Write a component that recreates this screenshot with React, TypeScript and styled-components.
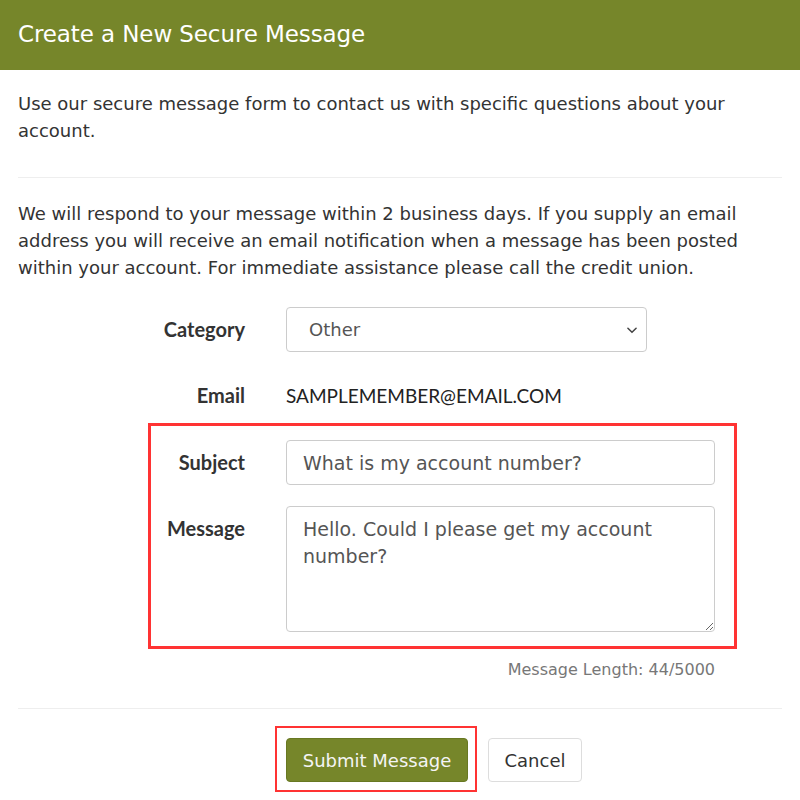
import React, { useState } from 'react'
import styled, { createGlobalStyle, css } from 'styled-components'

const GlobalStyle = createGlobalStyle`
  body {
    margin: 0;
    background: #fff;
    font-family: "DejaVu Sans", "Open Sans", sans-serif;
    color: #333;
  }
`

const BRAND = '#76862a'
const BODY_FONT = `"DejaVu Sans", "Open Sans", sans-serif`
const LABEL_FONT = `Lato, "Open Sans", sans-serif`

const Header = styled.header`
  height: 70px;
  display: flex;
  align-items: center;
  padding: 0 18px 3px;
  box-sizing: border-box;
  background: ${BRAND};
`

const Title = styled.h1`
  margin: 0;
  font-family: ${BODY_FONT};
  font-weight: normal;
  font-size: 23px;
  color: #fff;
  letter-spacing: -0.1px;
`

const Body = styled.main`
  padding: 20px 18px 0;
`

const Intro = styled.p`
  margin: 0;
  font-size: 18px;
  line-height: 27px;
  color: #333;
`

const Divider = styled.hr<{ $top: number; $bottom: number }>`
  border: 0;
  border-top: 1px solid #eee;
  margin: ${({ $top, $bottom }) => `${$top}px 0 ${$bottom}px`};
`

const Form = styled.form`
  display: flex;
  flex-direction: column;
  margin-top: 26px;
`

const Row = styled.div<{ $labelWidth?: number; $gap?: number }>`
  display: grid;
  grid-template-columns: ${({ $labelWidth = 227 }) => `${$labelWidth}px 429px`};
  column-gap: 41px;
  align-items: start;
  margin-bottom: ${({ $gap = 21 }) => $gap}px;
`

const Label = styled.label`
  font-family: ${LABEL_FONT};
  font-weight: 700;
  font-size: 20px;
  color: #333;
  text-align: right;
  line-height: 45px;
`

const fieldBase = css`
  box-sizing: border-box;
  width: 100%;
  border: 1px solid #ccc;
  border-radius: 4px;
  background: #fff;
  font-family: ${BODY_FONT};
  font-size: 19px;
  color: #555;
  padding: 0 16px;
  outline: none;
`

const SelectWrap = styled.div`
  position: relative;
  width: 361px;
`

const Select = styled.select`
  ${fieldBase};
  height: 45px;
  font-size: 18px;
  appearance: none;
  padding: 0 40px 0 22px;
`

const Chevron = styled.svg`
  position: absolute;
  right: 8px;
  top: 16px;
  pointer-events: none;
`

const StaticValue = styled.div`
  font-family: ${LABEL_FONT};
  font-size: 19px;
  color: #222;
  line-height: 45px;
`

const Input = styled.input`
  ${fieldBase};
  height: 45px;
`

const TextArea = styled.textarea`
  ${fieldBase};
  display: block;
  height: 126px;
  padding: 9px 16px;
  line-height: 27px;
  resize: vertical;
`

const Highlight = styled.div`
  box-sizing: border-box;
  width: 589px;
  margin: 0 0 0 130px;
  padding: 14px 19px 14px 0;
  border: 3px solid #ff3333;

  & > ${Row}:last-child {
    margin-bottom: 0;
  }
`

const Counter = styled.div`
  width: 697px;
  margin-top: 11px;
  text-align: right;
  font-size: 16px;
  line-height: 20px;
  color: #777;
`

const Actions = styled.div`
  display: flex;
  align-items: flex-start;
  gap: 11px;
  padding-left: 257px;
`

const Callout = styled.div`
  border: 2px solid #ff3333;
  padding: 10px 7px 8px 9px;
`

const Button = styled.button<{ $primary?: boolean }>`
  height: 44px;
  border-radius: 4px;
  font-family: ${BODY_FONT};
  font-size: 18px;
  cursor: pointer;
  ${({ $primary }) =>
    $primary
      ? css`
          width: 182px;
          background: ${BRAND};
          border: 1px solid #687822;
          color: #f4f4f4;
        `
      : css`
          width: 94px;
          margin-top: 12px;
          background: #fff;
          border: 1px solid #ddd;
          color: #333;
        `}
`

const App: React.FC = () => {
  const [subject, setSubject] = useState('What is my account number?')
  const [message, setMessage] = useState('Hello. Could I please get my account number?')

  return (
    <>
      <GlobalStyle />
      <Header>
        <Title>Create a New Secure Message</Title>
      </Header>
      <Body>
        <Intro>
          Use our secure message form to contact us with specific questions about your account.
        </Intro>
        <Divider $top={33} $bottom={22} />
        <Intro>
          We will respond to your message within 2 business days. If you supply an email address
          you will receive an email notification when a message has been posted within your
          account. For immediate assistance please call the credit union.
        </Intro>
        <Form onSubmit={e => e.preventDefault()}>
          <Row>
            <Label htmlFor="category">Category</Label>
            <SelectWrap>
              <Select id="category" defaultValue="other">
                <option value="other">Other</option>
              </Select>
              <Chevron width="14" height="14" viewBox="0 0 24 24" fill="none" stroke="#444" strokeWidth="2.6" strokeLinecap="round" strokeLinejoin="round">
                <path d="M5 9l7 7 7-7" />
              </Chevron>
            </SelectWrap>
          </Row>
          <Row $gap={5}>
            <Label>Email</Label>
            <StaticValue>SAMPLEMEMBER@EMAIL.COM</StaticValue>
          </Row>
          <Highlight>
            <Row $labelWidth={94}>
              <Label htmlFor="subject">Subject</Label>
              <Input id="subject" value={subject} onChange={e => setSubject(e.target.value)} />
            </Row>
            <Row $labelWidth={94}>
              <Label htmlFor="message">Message</Label>
              <TextArea id="message" value={message} onChange={e => setMessage(e.target.value)} />
            </Row>
          </Highlight>
          <Counter>Message Length: {message.length}/5000</Counter>
          <Divider $top={28} $bottom={17} />
          <Actions>
            <Callout>
              <Button $primary type="submit">Submit Message</Button>
            </Callout>
            <Button type="button">Cancel</Button>
          </Actions>
        </Form>
      </Body>
    </>
  )
}

export default App
